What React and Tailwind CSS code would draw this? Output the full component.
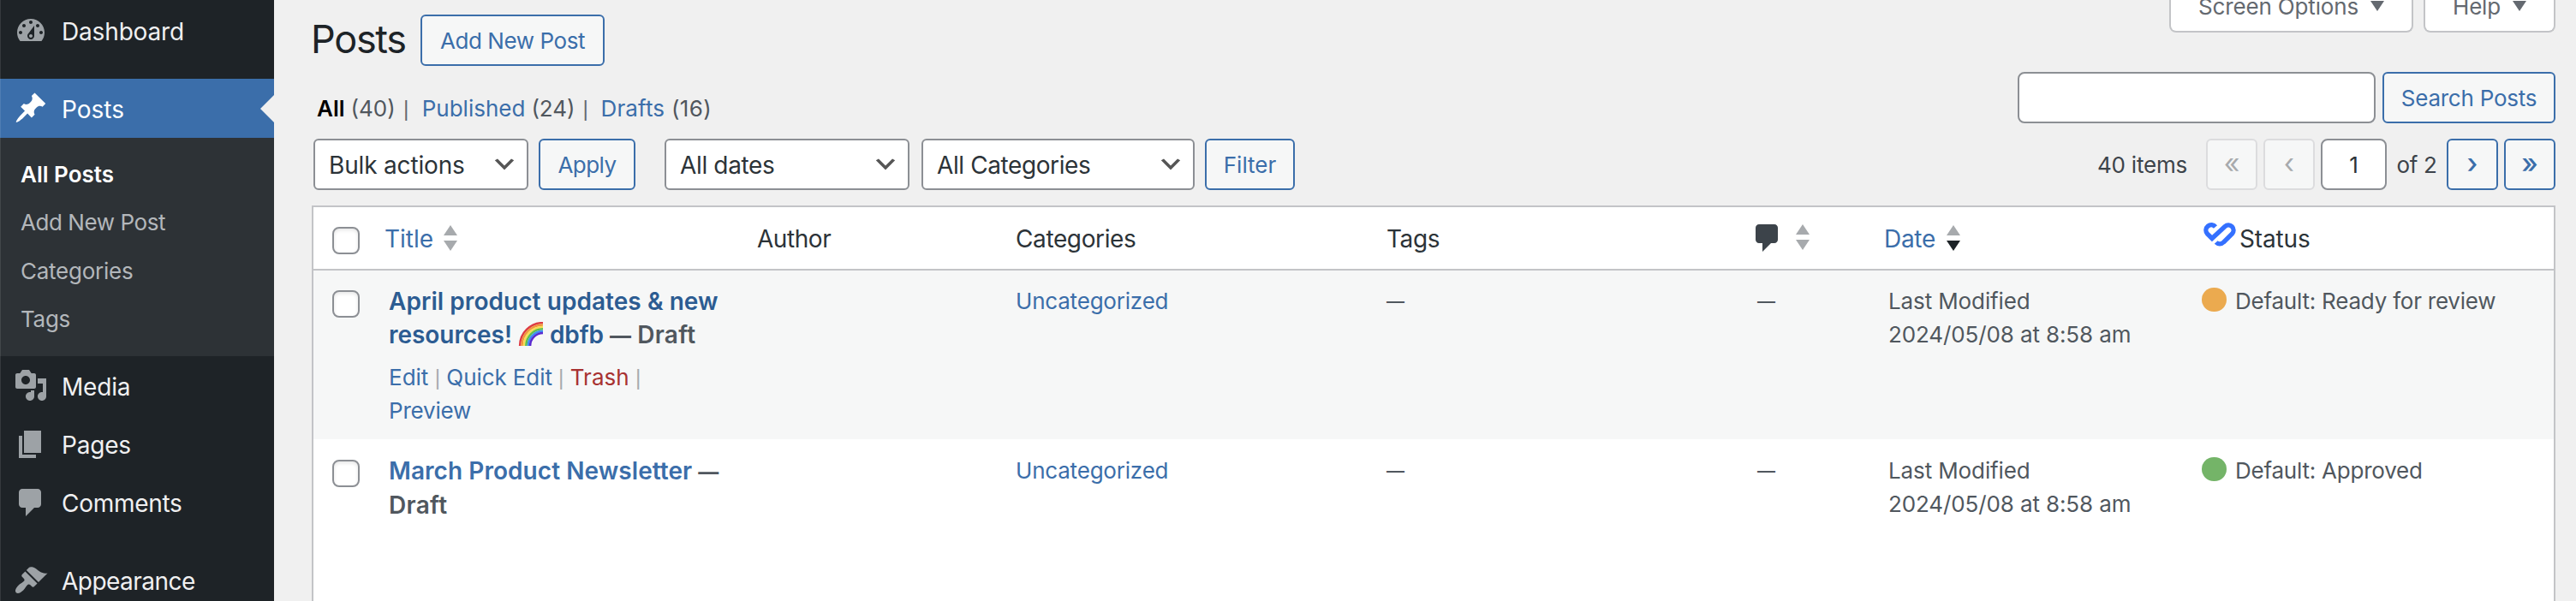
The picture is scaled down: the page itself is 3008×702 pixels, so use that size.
import clsx from 'clsx';

const ICONS = {
  dashboard:
    'M3.76 16h12.48c1.1-1.37 1.76-3.11 1.76-5 0-4.42-3.58-8-8-8s-8 3.58-8 8c0 1.89.66 3.63 1.76 5zM10 4c.55 0 1 .45 1 1s-.45 1-1 1-1-.45-1-1 .45-1 1-1zM6 6c.55 0 1 .45 1 1s-.45 1-1 1-1-.45-1-1 .45-1 1-1zm8 0c.55 0 1 .45 1 1s-.45 1-1 1-1-.45-1-1 .45-1 1-1zm-5.37 5.55L12 7v6c0 1.1-.9 2-2 2s-2-.9-2-2c0-.57.24-1.08.63-1.45zM4 10c.55 0 1 .45 1 1s-.45 1-1 1-1-.45-1-1 .45-1 1-1zm12 0c.55 0 1 .45 1 1s-.45 1-1 1-1-.45-1-1 .45-1 1-1zm-5 3c0-.55-.45-1-1-1s-1 .45-1 1 .45 1 1 1 1-.45 1-1z',
  pin: 'M10.44 3.02l1.82-1.82 6.36 6.35-1.83 1.82c-1.05-.68-2.48-.57-3.41.36l-.75.75c-.92.93-1.04 2.35-.35 3.41l-1.83 1.82-2.41-2.41-2.8 2.79c-.42.42-3.38 2.71-3.8 2.29s1.86-3.39 2.28-3.81l2.79-2.79L4.1 9.36l1.83-1.82c1.05.69 2.48.57 3.4-.36l.75-.75c.93-.92 1.05-2.35.36-3.41z',
  media:
    'M13 11V4c0-.55-.45-1-1-1h-1.67L9 1H5L3.67 3H2c-.55 0-1 .45-1 1v7c0 .55.45 1 1 1h10c.55 0 1-.45 1-1zM7 4.5c1.38 0 2.5 1.12 2.5 2.5S8.38 9.5 7 9.5 4.5 8.38 4.5 7 5.62 4.5 7 4.5zM14 6h5v10.5c0 1.38-1.12 2.5-2.5 2.5S14 17.88 14 16.5s1.12-2.5 2.5-2.5c.17 0 .34.02.5.05V9h-3V6zm-4 8.05V13h2v3.5c0 1.38-1.12 2.5-2.5 2.5S7 17.88 7 16.5 8.12 14 9.5 14c.17 0 .34.02.5.05z',
  page: 'M6 15V2h10v13H6zm-1 1h8v2H3V5h2v11z',
  comment: 'M5 2h9c1.1 0 2 .9 2 2v7c0 1.1-.9 2-2 2h-2l-5 5v-5H5c-1.1 0-2-.9-2-2V4c0-1.1.9-2 2-2z',
  brush:
    'M14.48 11.06L7.41 3.99l1.5-1.5c.5-.56 2.3-.47 3.51.32 1.21.8 1.43 1.28 2.91 2.1 1.18.64 2.45 1.26 4.45.85zm-.71.71L6.7 4.7 4.93 6.47c-.39.39-.39 1.02 0 1.41l1.06 1.06c.39.39.39 1.03 0 1.42-.6.6-1.43 1.11-2.21 1.69-.35.26-.7.53-1.01.84C1.43 14.23.4 16.08 1.4 17.07c.99 1 2.84-.03 4.18-1.36.31-.31.58-.66.85-1.02.57-.78 1.08-1.61 1.69-2.21.39-.39 1.02-.39 1.41 0l1.06 1.06c.39.39 1.02.39 1.41 0z',
};

function Icon({ name, className }) {
  return (
    <svg viewBox="0 0 20 20" fill="currentColor" fillRule="evenodd" className={clsx('size-10 shrink-0', className)}>
      <path d={ICONS[name]} />
    </svg>
  );
}

function MenuItem({ icon, label, active, className }) {
  return (
    <a className={clsx('relative flex gap-4 pl-4', active ? 'bg-[#3b6eaa] text-white' : 'text-[#f0f0f1]', className)}>
      <Icon name={icon} className={clsx('mt-3.5', active ? 'text-white' : 'text-[#9da2a6]')} />
      <span className={clsx('text-[28px] leading-9', active ? 'mt-[18px]' : 'mt-[17px]')}>{label}</span>
      {active && (
        <span className="absolute right-0 top-[19px] border-y-[16px] border-r-[16px] border-y-transparent border-r-[#f0f0f0]" />
      )}
    </a>
  );
}

function Sidebar() {
  return (
    <aside className="relative w-80 shrink-0 bg-[#1e2327] pt-0.5">
      <MenuItem icon="dashboard" label="Dashboard" className="mb-[22px] h-[68px] tracking-[-0.16px]" />
      <MenuItem icon="pin" label="Posts" active className="h-[69px]" />
      <ul className="h-[255px] bg-[#2d3236] pl-6 pt-[15px] text-[26px] leading-[56.3px] text-[#b3b7bb]">
        <li className="font-semibold text-white">All Posts</li>
        <li className="tracking-[-0.43px]">Add New Post</li>
        <li className="tracking-[-0.24px]">Categories</li>
        <li className="tracking-[-0.3px]">Tags</li>
      </ul>
      <MenuItem icon="media" label={<span className="block pt-px">Media</span>} className="h-[69px] tracking-[-0.2px]" />
      <MenuItem icon="page" label="Pages" className="h-[68px] tracking-[-0.2px]" />
      <MenuItem icon="comment" label="Comments" className="mb-[23px] h-[68px] tracking-[-0.29px]" />
      <MenuItem icon="brush" label="Appearance" className="h-[58px] tracking-[-0.53px]" />
      <div className="absolute inset-y-0 left-0 w-px bg-white/10" />
    </aside>
  );
}

function Button({ children, className }) {
  return (
    <button
      className={clsx(
        'flex h-[60px] items-center justify-center rounded-md border-2 border-[#3b6eaa] bg-[#f6f7f7] text-[26px] text-[#3b6eaa]',
        className
      )}
    >
      {children}
    </button>
  );
}

function Select({ label, className }) {
  return (
    <div
      className={clsx(
        'flex h-[60px] items-center justify-between rounded-md border-2 border-[#8c8f94] bg-white pl-4 pr-2.5 text-[28px] text-[#2c3338]',
        className
      )}
    >
      <span className="pt-px">{label}</span>
      <svg viewBox="0 0 20 20" className="size-8" fill="#555">
        <path d="M5 6l5 5 5-5 2 1-7 7-7-7 2-1z" />
      </svg>
    </div>
  );
}

function MetaTab({ label, className }) {
  return (
    <button
      className={clsx(
        'flex h-[38px] justify-between rounded-b-lg border-2 border-t-0 border-[#c3c4c7] bg-white px-8 text-[26px] text-[#646970]',
        className
      )}
    >
      <span className="-mt-3 leading-[39px]">{label}</span>
      <svg viewBox="0 0 16 12" className="mt-px h-3 w-4" fill="currentColor">
        <path d="M0 0h16L8 12z" />
      </svg>
    </button>
  );
}

function Sorter({ desc }) {
  return (
    <svg viewBox="0 0 16 30" className="-mt-[3px] h-[30px] w-4">
      <path d="M8 0l8 12H0z" fill="#a7aaad" />
      <path d="M0 18h16L8 30z" fill={desc ? '#1d2327' : '#a7aaad'} />
    </svg>
  );
}

function Checkbox({ className }) {
  return (
    <div
      className={clsx(
        'ml-[22px] size-8 rounded-lg border-2 border-[#8c8f94] bg-white shadow-[inset_0_2px_4px_rgba(0,0,0,0.1)]',
        className
      )}
    />
  );
}

function Pipe({ className }) {
  return <span className={clsx('mt-[3px] text-center text-[20px] font-medium', className)}>|</span>;
}

const RAINBOW = ['#dd3c43', '#f0973a', '#f8dc53', '#5fc04a', '#3f8ff0', '#5a2bd0'];

function Rainbow() {
  return (
    <svg viewBox="0 0 29 28" className="ml-[7px] mr-2 inline-block h-7 w-[29px] align-[-3px]">
      {RAINBOW.map((color, i) => (
        <circle key={color} cx="29" cy="28" r={26.9 - i * 2.4} fill="none" stroke={color} strokeWidth="2.5" />
      ))}
    </svg>
  );
}

function StatusLogo() {
  return (
    <svg viewBox="0 0 114 84" className="ml-0.5 mt-[18px] h-7 w-[38px] self-start" fill="none" stroke="#3470ff" strokeWidth="16">
      <path d="M42 15A18 18 0 0 0 13 38.700L30 55.500L75.300 13.300A18 18 0 0 1 100.700 38.700L70 69A18 18 0 0 1 44 69" />
    </svg>
  );
}

function Dash({ className }) {
  return <span className={clsx('text-[21px] font-medium', className)}>—</span>;
}

const COLS = 'grid grid-cols-[84px_436px_300px_433px_431px_150px_371px_1fr]';

function PostRow({ title, actions, status, color, className }) {
  return (
    <div className={clsx(COLS, 'text-[26px] leading-[39px] text-[#50575e]', className)}>
      <Checkbox className="mt-[7px]" />
      <div className="pl-1 pt-px">
        <div className="text-[28px] font-semibold">{title}</div>
        {actions}
      </div>
      <div />
      <div className="tracking-[-0.2px] text-[#3b6eaa]">Uncategorized</div>
      <Dash />
      <Dash className="pl-0.5" />
      <div className="pl-[5px] tracking-[-0.12px]">
        Last Modified
        <br />
        2024/05/08 at 8:58 am
      </div>
      <div className="flex items-start gap-2.5 tracking-[-0.22px]">
        <span className={clsx('mt-1 h-7 w-[29px] rounded-full', color)} />
        {status}
      </div>
    </div>
  );
}

function PostsTable() {
  return (
    <div className="mt-[18px] h-[480px] border-2 border-[#c3c4c7] bg-white">
      <div className={clsx(COLS, 'h-[74px] items-center border-b-2 border-[#c3c4c7] text-[28px] text-[#2c3338]')}>
        <Checkbox className="mt-1.5" />
        <div className="-ml-px flex items-center gap-3 pt-0.5 text-[#3b6eaa]">
          Title <Sorter />
        </div>
        <div className="-ml-0.5 pt-0.5 tracking-[-0.45px]">Author</div>
        <div className="pt-0.5 tracking-[-0.38px]">Categories</div>
        <div className="pt-0.5 tracking-[-0.4px]">Tags</div>
        <div className="-ml-1.5 flex items-center gap-[13px]">
          <Icon name="comment" className="text-[#3c434a]" />
          <Sorter />
        </div>
        <div className="flex items-center gap-[13px] pt-0.5 tracking-[-0.3px] text-[#3b6eaa]">
          Date <Sorter desc />
        </div>
        <div className="flex h-full items-center gap-1 tracking-[-0.14px]">
          <StatusLogo />
          <span className="pt-px">Status</span>
        </div>
      </div>
      <PostRow
        className="h-[197px] bg-[#f6f7f7] pt-4"
        title={
          <>
            <span className="tracking-[0.06px] text-[#2c5c92]">April product updates &amp; new</span>
            <br />
            <span className="tracking-[-0.05px] text-[#2c5c92]">
              resources!
              <Rainbow />
              dbfb
            </span>{' '}
            <span className="text-[25px] font-bold">—</span> <span className="tracking-[0.3px]">Draft</span>
          </>
        }
        actions={
          <div className="mt-[9px] text-[#3b6eaa]">
            <div className="flex h-[39px]">
              Edit
              <Pipe className="w-[21px] text-[#a7aaad]" />
              <span className="tracking-[-0.09px]">Quick Edit</span>
              <Pipe className="w-[21px] text-[#a7aaad]" />
              <span className="text-[#a83232]">Trash</span>
              <Pipe className="w-[21px] text-[#a7aaad]" />
            </div>
            <div className="tracking-[-0.2px]">Preview</div>
          </div>
        }
        status="Default: Ready for review"
        color="bg-[#ebaa4f]"
      />
      <PostRow
        className="pt-[17px]"
        title={
          <>
            <span className="tracking-[0.06px] text-[#3b6eaa]">March Product Newsletter</span>{' '}
            <span className="text-[24px] font-bold">—</span>
            <br />
            <span className="tracking-[0.3px]">Draft</span>
          </>
        }
        status="Default: Approved"
        color="bg-[#74b468]"
      />
    </div>
  );
}

function StatusFilters() {
  return (
    <div className="ml-1.5 mt-[23px] flex text-[26px] leading-[39px] text-[#50575e]">
      <b className="mr-[7px] font-semibold text-black">All</b>(40)
      <Pipe className="w-[31px] pr-1.5 text-[#646970]" />
      <span className="mr-[7px] text-[#3b6eaa]">Published</span>(24)
      <Pipe className="w-[30px] pr-1.5 text-[#646970]" />
      <span className="mr-2 tracking-[0.1px] text-[#3b6eaa]">Drafts</span>
      <span className="tracking-[0.3px]">(16)</span>
    </div>
  );
}

function Pagination() {
  return (
    <div className="flex items-center text-[26px] text-[#3c434a]">
      <span className="mr-[22px] tracking-[-0.2px]">40 items</span>
      <Button className="mr-[7px] w-[60px] border-[#dcdcde]! pb-0.5 text-[32px]! text-[#a7aaad]!">«</Button>
      <Button className="mr-[7px] w-[60px] border-[#dcdcde]! pb-0.5 text-[32px]! text-[#a7aaad]!">‹</Button>
      <div className="flex h-[60px] w-[77px] items-center justify-center rounded-lg border-2 border-[#8c8f94] bg-white text-[#2c3338]">
        1
      </div>
      <span className="w-[70px] text-center tracking-[-0.3px]">of 2</span>
      <Button className="mr-[7px] w-[60px] pb-0.5 text-[32px]! font-medium">›</Button>
      <Button className="w-[60px] pb-0.5 text-[32px]! font-medium">»</Button>
    </div>
  );
}

export default function App() {
  return (
    <div className="flex h-[702px] w-[3008px] overflow-hidden bg-[#f0f0f0] font-['Inter',sans-serif]">
      <Sidebar />
      <main className="flex-1 pl-11 pr-6">
        <div className="flex h-[84px] items-start justify-between">
          <div className="flex items-start">
            <h1 className="-ml-px mt-[23px] w-32 text-[45px] leading-[46px] tracking-[-1.3px] text-[#1d2327]">Posts</h1>
            <Button className="mt-[17px] w-[215px] tracking-[-0.43px]">Add New Post</Button>
          </div>
          <div className="flex gap-3">
            <MetaTab label="Screen Options" className="w-[285px] tracking-[-0.15px]" />
            <MetaTab label="Help" className="w-[154px] tracking-[-0.19px]" />
          </div>
        </div>
        <div className="flex h-[78px] items-start justify-between">
          <StatusFilters />
          <div className="flex gap-2">
            <div className="h-[60px] w-[418px] rounded-lg border-2 border-[#8c8f94] bg-white" />
            <Button className="w-[202px] tracking-[-0.24px]">Search Posts</Button>
          </div>
        </div>
        <div className="flex justify-between">
          <div className="ml-0.5 flex">
            <Select label="Bulk actions" className="mr-3 w-[251px] tracking-[-0.17px]" />
            <Button className="mr-[34px] w-[113px] tracking-[-0.55px]">Apply</Button>
            <Select label="All dates" className="mr-3.5 w-[286px] tracking-[-0.35px]" />
            <Select label="All Categories" className="mr-3 w-[319px] tracking-[-0.4px]" />
            <Button className="w-[105px]">Filter</Button>
          </div>
          <Pagination />
        </div>
        <PostsTable />
      </main>
    </div>
  );
}
